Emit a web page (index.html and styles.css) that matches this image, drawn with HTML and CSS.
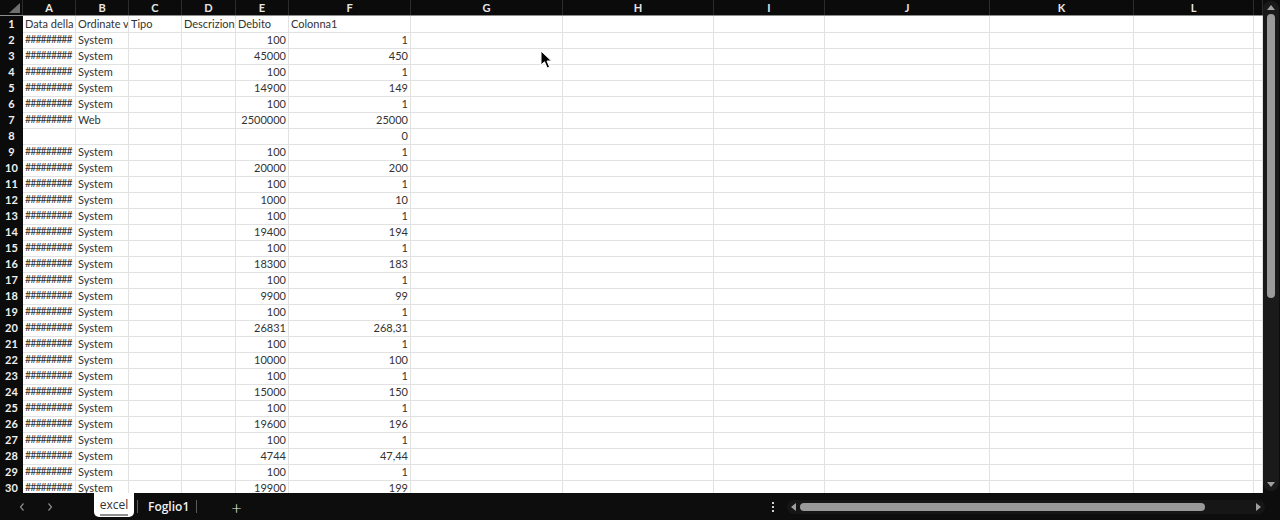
FILE: index.html
```html
<!DOCTYPE html>
<html lang="it">
<head>
<meta charset="utf-8">
<title>excel</title>
<link rel="stylesheet" href="styles.css">
</head>
<body>
<div class="app">
  <div class="main">
    <div class="sheet">
      <div class="row head">
        <div class="corner"><span class="tri"></span></div>
        <div class="ch">A</div><div class="ch">B</div><div class="ch">C</div><div class="ch">D</div><div class="ch">E</div><div class="ch">F</div><div class="ch">G</div><div class="ch">H</div><div class="ch">I</div><div class="ch">J</div><div class="ch">K</div><div class="ch">L</div><div class="ch"></div>
      </div>
      <div class="row"><div class="rh">1</div><div class="c">Data della</div><div class="c">Ordinate v</div><div class="c">Tipo</div><div class="c">Descrizion</div><div class="c">Debito</div><div class="c">Colonna1</div><div class="c"></div><div class="c"></div><div class="c"></div><div class="c"></div><div class="c"></div><div class="c"></div><div class="c"></div></div>
      <div class="row"><div class="rh">2</div><div class="c hash">#########</div><div class="c">System</div><div class="c"></div><div class="c"></div><div class="c n">100</div><div class="c n">1</div><div class="c"></div><div class="c"></div><div class="c"></div><div class="c"></div><div class="c"></div><div class="c"></div><div class="c"></div></div>
      <div class="row"><div class="rh">3</div><div class="c hash">#########</div><div class="c">System</div><div class="c"></div><div class="c"></div><div class="c n">45000</div><div class="c n">450</div><div class="c"></div><div class="c"></div><div class="c"></div><div class="c"></div><div class="c"></div><div class="c"></div><div class="c"></div></div>
      <div class="row"><div class="rh">4</div><div class="c hash">#########</div><div class="c">System</div><div class="c"></div><div class="c"></div><div class="c n">100</div><div class="c n">1</div><div class="c"></div><div class="c"></div><div class="c"></div><div class="c"></div><div class="c"></div><div class="c"></div><div class="c"></div></div>
      <div class="row"><div class="rh">5</div><div class="c hash">#########</div><div class="c">System</div><div class="c"></div><div class="c"></div><div class="c n">14900</div><div class="c n">149</div><div class="c"></div><div class="c"></div><div class="c"></div><div class="c"></div><div class="c"></div><div class="c"></div><div class="c"></div></div>
      <div class="row"><div class="rh">6</div><div class="c hash">#########</div><div class="c">System</div><div class="c"></div><div class="c"></div><div class="c n">100</div><div class="c n">1</div><div class="c"></div><div class="c"></div><div class="c"></div><div class="c"></div><div class="c"></div><div class="c"></div><div class="c"></div></div>
      <div class="row"><div class="rh">7</div><div class="c hash">#########</div><div class="c">Web</div><div class="c"></div><div class="c"></div><div class="c n">2500000</div><div class="c n">25000</div><div class="c"></div><div class="c"></div><div class="c"></div><div class="c"></div><div class="c"></div><div class="c"></div><div class="c"></div></div>
      <div class="row"><div class="rh">8</div><div class="c"></div><div class="c"></div><div class="c"></div><div class="c"></div><div class="c"></div><div class="c n">0</div><div class="c"></div><div class="c"></div><div class="c"></div><div class="c"></div><div class="c"></div><div class="c"></div><div class="c"></div></div>
      <div class="row"><div class="rh">9</div><div class="c hash">#########</div><div class="c">System</div><div class="c"></div><div class="c"></div><div class="c n">100</div><div class="c n">1</div><div class="c"></div><div class="c"></div><div class="c"></div><div class="c"></div><div class="c"></div><div class="c"></div><div class="c"></div></div>
      <div class="row"><div class="rh">10</div><div class="c hash">#########</div><div class="c">System</div><div class="c"></div><div class="c"></div><div class="c n">20000</div><div class="c n">200</div><div class="c"></div><div class="c"></div><div class="c"></div><div class="c"></div><div class="c"></div><div class="c"></div><div class="c"></div></div>
      <div class="row"><div class="rh">11</div><div class="c hash">#########</div><div class="c">System</div><div class="c"></div><div class="c"></div><div class="c n">100</div><div class="c n">1</div><div class="c"></div><div class="c"></div><div class="c"></div><div class="c"></div><div class="c"></div><div class="c"></div><div class="c"></div></div>
      <div class="row"><div class="rh">12</div><div class="c hash">#########</div><div class="c">System</div><div class="c"></div><div class="c"></div><div class="c n">1000</div><div class="c n">10</div><div class="c"></div><div class="c"></div><div class="c"></div><div class="c"></div><div class="c"></div><div class="c"></div><div class="c"></div></div>
      <div class="row"><div class="rh">13</div><div class="c hash">#########</div><div class="c">System</div><div class="c"></div><div class="c"></div><div class="c n">100</div><div class="c n">1</div><div class="c"></div><div class="c"></div><div class="c"></div><div class="c"></div><div class="c"></div><div class="c"></div><div class="c"></div></div>
      <div class="row"><div class="rh">14</div><div class="c hash">#########</div><div class="c">System</div><div class="c"></div><div class="c"></div><div class="c n">19400</div><div class="c n">194</div><div class="c"></div><div class="c"></div><div class="c"></div><div class="c"></div><div class="c"></div><div class="c"></div><div class="c"></div></div>
      <div class="row"><div class="rh">15</div><div class="c hash">#########</div><div class="c">System</div><div class="c"></div><div class="c"></div><div class="c n">100</div><div class="c n">1</div><div class="c"></div><div class="c"></div><div class="c"></div><div class="c"></div><div class="c"></div><div class="c"></div><div class="c"></div></div>
      <div class="row"><div class="rh">16</div><div class="c hash">#########</div><div class="c">System</div><div class="c"></div><div class="c"></div><div class="c n">18300</div><div class="c n">183</div><div class="c"></div><div class="c"></div><div class="c"></div><div class="c"></div><div class="c"></div><div class="c"></div><div class="c"></div></div>
      <div class="row"><div class="rh">17</div><div class="c hash">#########</div><div class="c">System</div><div class="c"></div><div class="c"></div><div class="c n">100</div><div class="c n">1</div><div class="c"></div><div class="c"></div><div class="c"></div><div class="c"></div><div class="c"></div><div class="c"></div><div class="c"></div></div>
      <div class="row"><div class="rh">18</div><div class="c hash">#########</div><div class="c">System</div><div class="c"></div><div class="c"></div><div class="c n">9900</div><div class="c n">99</div><div class="c"></div><div class="c"></div><div class="c"></div><div class="c"></div><div class="c"></div><div class="c"></div><div class="c"></div></div>
      <div class="row"><div class="rh">19</div><div class="c hash">#########</div><div class="c">System</div><div class="c"></div><div class="c"></div><div class="c n">100</div><div class="c n">1</div><div class="c"></div><div class="c"></div><div class="c"></div><div class="c"></div><div class="c"></div><div class="c"></div><div class="c"></div></div>
      <div class="row"><div class="rh">20</div><div class="c hash">#########</div><div class="c">System</div><div class="c"></div><div class="c"></div><div class="c n">26831</div><div class="c n">268,31</div><div class="c"></div><div class="c"></div><div class="c"></div><div class="c"></div><div class="c"></div><div class="c"></div><div class="c"></div></div>
      <div class="row"><div class="rh">21</div><div class="c hash">#########</div><div class="c">System</div><div class="c"></div><div class="c"></div><div class="c n">100</div><div class="c n">1</div><div class="c"></div><div class="c"></div><div class="c"></div><div class="c"></div><div class="c"></div><div class="c"></div><div class="c"></div></div>
      <div class="row"><div class="rh">22</div><div class="c hash">#########</div><div class="c">System</div><div class="c"></div><div class="c"></div><div class="c n">10000</div><div class="c n">100</div><div class="c"></div><div class="c"></div><div class="c"></div><div class="c"></div><div class="c"></div><div class="c"></div><div class="c"></div></div>
      <div class="row"><div class="rh">23</div><div class="c hash">#########</div><div class="c">System</div><div class="c"></div><div class="c"></div><div class="c n">100</div><div class="c n">1</div><div class="c"></div><div class="c"></div><div class="c"></div><div class="c"></div><div class="c"></div><div class="c"></div><div class="c"></div></div>
      <div class="row"><div class="rh">24</div><div class="c hash">#########</div><div class="c">System</div><div class="c"></div><div class="c"></div><div class="c n">15000</div><div class="c n">150</div><div class="c"></div><div class="c"></div><div class="c"></div><div class="c"></div><div class="c"></div><div class="c"></div><div class="c"></div></div>
      <div class="row"><div class="rh">25</div><div class="c hash">#########</div><div class="c">System</div><div class="c"></div><div class="c"></div><div class="c n">100</div><div class="c n">1</div><div class="c"></div><div class="c"></div><div class="c"></div><div class="c"></div><div class="c"></div><div class="c"></div><div class="c"></div></div>
      <div class="row"><div class="rh">26</div><div class="c hash">#########</div><div class="c">System</div><div class="c"></div><div class="c"></div><div class="c n">19600</div><div class="c n">196</div><div class="c"></div><div class="c"></div><div class="c"></div><div class="c"></div><div class="c"></div><div class="c"></div><div class="c"></div></div>
      <div class="row"><div class="rh">27</div><div class="c hash">#########</div><div class="c">System</div><div class="c"></div><div class="c"></div><div class="c n">100</div><div class="c n">1</div><div class="c"></div><div class="c"></div><div class="c"></div><div class="c"></div><div class="c"></div><div class="c"></div><div class="c"></div></div>
      <div class="row"><div class="rh">28</div><div class="c hash">#########</div><div class="c">System</div><div class="c"></div><div class="c"></div><div class="c n">4744</div><div class="c n">47,44</div><div class="c"></div><div class="c"></div><div class="c"></div><div class="c"></div><div class="c"></div><div class="c"></div><div class="c"></div></div>
      <div class="row"><div class="rh">29</div><div class="c hash">#########</div><div class="c">System</div><div class="c"></div><div class="c"></div><div class="c n">100</div><div class="c n">1</div><div class="c"></div><div class="c"></div><div class="c"></div><div class="c"></div><div class="c"></div><div class="c"></div><div class="c"></div></div>
      <div class="row"><div class="rh">30</div><div class="c hash">#########</div><div class="c">System</div><div class="c"></div><div class="c"></div><div class="c n">19900</div><div class="c n">199</div><div class="c"></div><div class="c"></div><div class="c"></div><div class="c"></div><div class="c"></div><div class="c"></div><div class="c"></div></div>
      <svg class="cursor" width="13" height="20" viewBox="0 0 13 20"><path d="M1 1 L1 15 L4.5 11.8 L7.2 18 L9.6 17 L7 11 L11.5 11 Z" fill="#000" stroke="#fff" stroke-width="1"/></svg>
    </div>
    <div class="vscroll">
      <div class="vtrack">
        <span class="arr-up"></span>
        <div class="vthumb"></div>
        <span class="arr-down"></span>
      </div>
    </div>
  </div>
  <div class="tabbar">
    <div class="nav">
      <svg class="navbtn" width="8" height="10" viewBox="0 0 8 10"><path d="M5.5 1.5 L2.5 5 L5.5 8.5" fill="none" stroke="#8c8c8c" stroke-width="1.2"/></svg>
      <svg class="navbtn" width="8" height="10" viewBox="0 0 8 10"><path d="M2.5 1.5 L5.5 5 L2.5 8.5" fill="none" stroke="#8c8c8c" stroke-width="1.2"/></svg>
    </div>
    <div class="tabs">
      <div class="tab active"><span class="tablabel">excel</span></div>
      <span class="sep first"></span>
      <div class="tab">Foglio1</div>
      <span class="sep"></span>
      <div class="plus">+</div>
    </div>
    <div class="spacer"></div>
    <div class="dots"><span></span><span></span><span></span></div>
    <div class="htrack">
      <span class="arr-left"></span>
      <div class="hthumb"></div>
      <span class="arr-right"></span>
    </div>
  </div>
</div>
</body>
</html>
```

FILE: styles.css
```css
* { box-sizing: border-box; }
html, body { margin: 0; padding: 0; background: #0d0d0d; }
.app {
  width: 1280px;
  height: 520px;
  display: flex;
  flex-direction: column;
  overflow: hidden;
  font-family: Lato, "Noto Sans", sans-serif;
}
.main {
  height: 493px;
  display: flex;
  flex-direction: row;
}
.sheet {
  position: relative;
  width: 1263px;
  height: 493px;
  background: #fff;
  overflow: hidden;
}
.row {
  display: grid;
  grid-template-columns: 23px 53px 53px 53px 54px 53px 122px 152px 151px 111px 165px 144px 120px 1fr;
  height: 16px;
}
.row.head {
  background: #0b0b0b;
  border-bottom: 1px solid #8c8c8c;
}
.corner {
  position: relative;
  background: #0b0b0b;
  border-right: 1px solid #2c2c2c;
}
.tri {
  position: absolute;
  right: 2px;
  bottom: 2px;
  width: 0;
  height: 0;
  border-left: 11px solid transparent;
  border-bottom: 10px solid #6e6e6e;
}
.ch {
  color: #e6e6e6;
  font-size: 11px;
  font-weight: 700;
  line-height: 15px;
  text-align: center;
  border-right: 1px solid #2c2c2c;
}
.rh {
  background: #0b0b0b;
  color: #f0f0f0;
  font-size: 11px;
  font-weight: 700;
  line-height: 16px;
  text-align: center;
  border-bottom: 1px solid #2a2a2a;
}
.c {
  color: #333;
  font-size: 11px;
  line-height: 15px;
  padding: 0 2px;
  white-space: nowrap;
  overflow: hidden;
  border-right: 1px solid #e2e2e2;
  border-bottom: 1px solid #e2e2e2;
}
.c.n { text-align: right; }
.c.hash { letter-spacing: -0.9px; font-size: 10.5px; }
.cursor {
  position: absolute;
  left: 540px;
  top: 50px;
}
.vscroll {
  width: 17px;
  height: 493px;
  background: #0d0d0d;
  padding: 1px 0 0 0;
}
.vtrack {
  position: relative;
  width: 16px;
  height: 490px;
  background: #1a1a1a;
  border-radius: 8px;
  display: flex;
  flex-direction: column;
  align-items: center;
  padding-top: 4px;
}
.arr-up {
  width: 0; height: 0;
  border-left: 4px solid transparent;
  border-right: 4px solid transparent;
  border-bottom: 5px solid #a0a0a0;
}
.vthumb {
  margin-top: 4px;
  width: 8px;
  height: 284px;
  background: #9a9a9a;
  border-radius: 4px;
}
.arr-down {
  position: absolute;
  bottom: 4px;
  width: 0; height: 0;
  border-left: 4px solid transparent;
  border-right: 4px solid transparent;
  border-top: 5px solid #a0a0a0;
}
.tabbar {
  height: 27px;
  background: #0d0d0d;
  display: flex;
  align-items: center;
}
.nav {
  display: flex;
  align-items: center;
  width: 94px;
  padding-left: 18px;
  gap: 20px;
}
.navbtn { display: block; }
.tabs {
  display: flex;
  align-items: center;
  height: 27px;
}
.tab {
  color: #f2f2f2;
  font-family: "Open Sans", "Noto Sans", sans-serif;
  font-size: 12px;
  font-weight: 600;
  padding: 0 7px 0 10px;
  line-height: 20px;
}
.tab.active {
  align-self: flex-start;
  background: #fff;
  color: #333;
  font-weight: 400;
  height: 24px;
  width: 40px;
  padding: 2px 0 0 0;
  text-align: center;
  border-radius: 0 0 5px 5px;
}
.tablabel {
  display: inline-block;
  line-height: 16px;
  padding-bottom: 1px;
  border-bottom: 2px solid #8f8f8f;
}
.sep {
  width: 1px;
  height: 13px;
  background: #5a5a5a;
}
.sep.first { margin-left: 3px; }
.plus {
  color: #f0f0f0;
  font-size: 18px;
  font-weight: 300;
  line-height: 18px;
  margin-left: 34px;
}
.spacer { flex: 1; }
.dots {
  display: flex;
  flex-direction: column;
  gap: 2px;
  margin-right: 13px;
}
.dots span {
  width: 2px;
  height: 2px;
  background: #d0d0d0;
}
.htrack {
  position: relative;
  width: 478px;
  height: 14px;
  margin-right: 15px;
  background: #161616;
  border-radius: 7px;
  display: flex;
  align-items: center;
  padding: 0 4px;
}
.arr-left {
  width: 0; height: 0;
  border-top: 4px solid transparent;
  border-bottom: 4px solid transparent;
  border-right: 5px solid #a0a0a0;
}
.hthumb {
  margin-left: 4px;
  width: 405px;
  height: 8px;
  background: #9a9a9a;
  border-radius: 4px;
}
.arr-right {
  position: absolute;
  right: 4px;
  width: 0; height: 0;
  border-top: 4px solid transparent;
  border-bottom: 4px solid transparent;
  border-left: 5px solid #a0a0a0;
}
```
